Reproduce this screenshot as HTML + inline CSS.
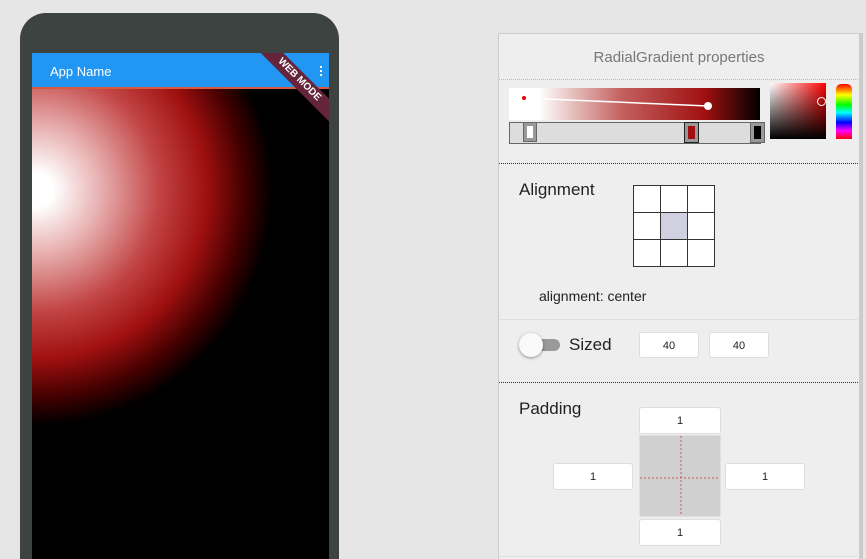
<!DOCTYPE html><html style="overflow:hidden"><head><style>
html,body{margin:0;width:866px;height:559px;overflow:hidden}
body{background:#e6e6e6;position:relative;font-family:"Liberation Sans",sans-serif}
.a{position:absolute}
.inp{position:absolute;background:#fff;border:1px solid #ddd;border-radius:3px;font-size:11px;color:#222;text-align:center;box-sizing:border-box}
</style></head><body>
<div class="a" style="left:20px;top:13px;width:319px;height:546px;background:#3d4340;border-radius:26px 26px 0 0"></div>
<div class="a" style="left:32px;top:53px;width:297px;height:506px;background:#000;overflow:hidden">
 <div class="a" style="left:0;top:35px;width:297px;height:480px;background:radial-gradient(circle 235px at 5px 102px,#fff 0%,#fff 7%,#e8b0b0 27%,#c24444 52%,#a01010 72%,#400 88%,#000 100%)"></div>
 <div class="a" style="left:0;top:0;width:297px;height:34px;background:#2196f3"></div>
 <div class="a" style="left:0;top:34px;width:297px;height:2px;background:#d8583a"></div>
 <div class="a" style="left:18px;top:11px;color:#fff;font-size:13px">App Name</div>
 <div class="a" style="left:288px;top:13px;width:2px;height:2px;background:#fff;box-shadow:0 4px #fff,0 8px #fff"></div>
 <div class="a" style="left:212px;top:19px;width:110px;height:16px;background:#66243a;transform:rotate(45deg);color:#fff;font-size:10px;font-weight:bold;text-align:center;line-height:16px">WEB MODE</div>
</div>
<div class="a" style="left:498px;top:33px;width:360px;height:530px;background:#eee;border:1px solid #ccc;border-right:4px solid #ccc"></div>
<div class="a" style="left:498px;top:49px;width:362px;text-align:center;color:#777;font-size:15px">RadialGradient properties</div>
<div class="a" style="left:499px;top:79px;width:359px;border-top:1px dotted #bbb"></div>
<div class="a" style="left:509px;top:88px;width:251px;height:32px;background:linear-gradient(90deg,#fff 12%,#c46060 45%,#a01010 78%,#000 100%)"></div>
<svg class="a" style="left:509px;top:88px" width="251" height="32"><line x1="15" y1="10" x2="199" y2="18" stroke="#fff" stroke-width="1.5"/><circle cx="15" cy="10" r="3" fill="#fff"/><circle cx="15" cy="10" r="2" fill="#e00"/><circle cx="199" cy="18" r="4" fill="#fff"/></svg>
<div class="a" style="left:509px;top:122px;width:250px;height:20px;background:#ddd;border:1px solid #666"></div>
<div class="a" style="left:523px;top:122px;width:12px;height:18px;background:#999;border:1px solid #666"><div style="margin:3px;height:12px;background:#fff"></div></div>
<div class="a" style="left:684px;top:122px;width:13px;height:19px;background:#999;border:1px solid #222"><div style="margin:3px;height:13px;background:#a01010"></div></div>
<div class="a" style="left:750px;top:122px;width:13px;height:19px;background:#999;border:1px solid #666"><div style="margin:3px;height:13px;background:#000"></div></div>
<div class="a" style="left:770px;top:83px;width:56px;height:56px;background:linear-gradient(to top,#000,transparent),linear-gradient(to right,#fff,#f00)"></div>
<div class="a" style="left:817px;top:97px;width:7px;height:7px;border:1px solid #fff;border-radius:50%"></div>
<div class="a" style="left:836px;top:84px;width:16px;height:55px;border-radius:5px 5px 0 0;background:linear-gradient(#f00,#ff0 20%,#0f0 38%,#0ff 52%,#00f 70%,#f0f 85%,#f00)"></div>
<div class="a" style="left:499px;top:163px;width:359px;border-top:1px dotted #333"></div>
<div class="a" style="left:519px;top:180px;font-size:17px;color:#222">Alignment</div>
<svg class="a" style="left:633px;top:185px" width="82" height="82"><rect x="0.5" y="0.5" width="81" height="81" fill="#fff" stroke="#333"/><rect x="27.5" y="27.5" width="27" height="27" fill="#d0d0e0"/><path d="M27.5 0V82M54.5 0V82M0 27.5H82M0 54.5H82" stroke="#333"/></svg>
<div class="a" style="left:539px;top:288px;font-size:14px;color:#222">alignment: center</div>
<div class="a" style="left:499px;top:319px;width:359px;border-top:1px solid #e0e0e0"></div>
<div class="a" style="left:524px;top:339px;width:36px;height:12px;border-radius:6px;background:#9a9a9a"></div>
<div class="a" style="left:519px;top:333px;width:24px;height:24px;border-radius:50%;background:#fafafa;box-shadow:0 1px 3px rgba(0,0,0,.4)"></div>
<div class="a" style="left:569px;top:335px;font-size:17px;color:#222">Sized</div>
<div class="inp" style="left:639px;top:332px;width:60px;height:26px;line-height:26px">40</div>
<div class="inp" style="left:709px;top:332px;width:60px;height:26px;line-height:26px">40</div>
<div class="a" style="left:499px;top:382px;width:359px;border-top:1px dotted #333"></div>
<div class="a" style="left:519px;top:399px;font-size:17px;color:#222">Padding</div>
<div class="inp" style="left:639px;top:407px;width:82px;height:27px;line-height:27px">1</div>
<div class="a" style="left:639px;top:435px;width:82px;height:82px;background:#d0d0d0;border:1px solid #e0e0e0;box-sizing:border-box"></div>
<svg class="a" style="left:639px;top:435px" width="82" height="82"><path d="M42 1V81M1 43H81" stroke="#c55" stroke-dasharray="2,2"/></svg>
<div class="inp" style="left:553px;top:463px;width:80px;height:27px;line-height:27px">1</div>
<div class="inp" style="left:725px;top:463px;width:80px;height:27px;line-height:27px">1</div>
<div class="inp" style="left:639px;top:519px;width:82px;height:27px;line-height:27px">1</div>
<div class="a" style="left:499px;top:556px;width:359px;border-top:1px solid #e0e0e0"></div>
</body></html>
